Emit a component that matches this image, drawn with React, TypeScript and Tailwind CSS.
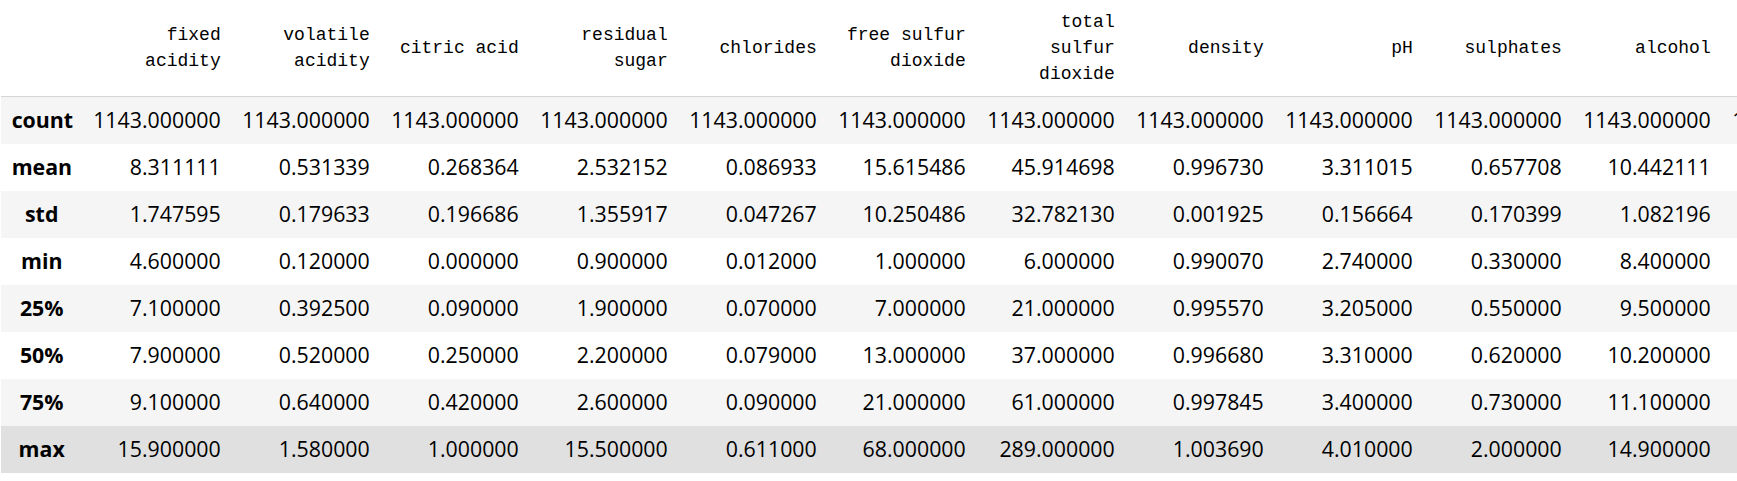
const columns: string[][] = [
  ["fixed", "acidity"],
  ["volatile", "acidity"],
  ["citric acid"],
  ["residual", "sugar"],
  ["chlorides"],
  ["free sulfur", "dioxide"],
  ["total", "sulfur", "dioxide"],
  ["density"],
  ["pH"],
  ["sulphates"],
  ["alcohol"],
  ["quality"],
  ["Id"],
];

const rows: [string, string[]][] = [
  ["count", Array(13).fill("1143.000000")],
  ["mean", ["8.311111", "0.531339", "0.268364", "2.532152", "0.086933", "15.615486", "45.914698", "0.996730", "3.311015", "0.657708", "10.442111", "5.657043", "804.969379"]],
  ["std", ["1.747595", "0.179633", "0.196686", "1.355917", "0.047267", "10.250486", "32.782130", "0.001925", "0.156664", "0.170399", "1.082196", "0.805824", "463.997116"]],
  ["min", ["4.600000", "0.120000", "0.000000", "0.900000", "0.012000", "1.000000", "6.000000", "0.990070", "2.740000", "0.330000", "8.400000", "3.000000", "0.000000"]],
  ["25%", ["7.100000", "0.392500", "0.090000", "1.900000", "0.070000", "7.000000", "21.000000", "0.995570", "3.205000", "0.550000", "9.500000", "5.000000", "411.000000"]],
  ["50%", ["7.900000", "0.520000", "0.250000", "2.200000", "0.079000", "13.000000", "37.000000", "0.996680", "3.310000", "0.620000", "10.200000", "6.000000", "794.000000"]],
  ["75%", ["9.100000", "0.640000", "0.420000", "2.600000", "0.090000", "21.000000", "61.000000", "0.997845", "3.400000", "0.730000", "11.100000", "6.000000", "1209.500000"]],
  ["max", ["15.900000", "1.580000", "1.000000", "15.500000", "0.611000", "68.000000", "289.000000", "1.003690", "4.010000", "2.000000", "14.900000", "8.000000", "1597.000000"]],
];

export default function App() {
  return (
    <div className="w-full overflow-hidden bg-white text-black">
      <table className="ml-px table-fixed border-collapse w-[2018.4px]">
        <colgroup>
          <col className="w-[81.4px]" />
          {columns.map((_, i) => (
            <col key={i} className="w-[149px]" />
          ))}
        </colgroup>
        <thead>
          <tr className="border-b border-[#d6d6d6]">
            <th className="p-0"></th>
            {columns.map((lines, i) => (
              <th
                key={i}
                className="px-[10.67px] py-[9px] text-right align-middle font-normal text-[18px] leading-[26px] font-['Liberation_Mono',monospace] whitespace-nowrap"
              >
                {lines.map((l, j) => (
                  <div key={j}>{l}</div>
                ))}
              </th>
            ))}
          </tr>
        </thead>
        <tbody className="font-['Open_Sans',sans-serif] text-[21.33px] leading-[25.67px]">
          {rows.map(([label, vals], r) => (
            <tr
              key={label}
              className={label === "max" ? "bg-[#e0e0e0]" : r % 2 === 0 ? "bg-[#f5f5f5]" : "bg-white"}
            >
              <th className="h-[47px] px-[10.67px] py-0 text-center font-bold">{label}</th>
              {vals.map((v, i) => (
                <td key={i} className="h-[47px] px-[10.67px] py-0 text-right whitespace-nowrap">
                  {v}
                </td>
              ))}
            </tr>
          ))}
        </tbody>
      </table>
    </div>
  );
}
